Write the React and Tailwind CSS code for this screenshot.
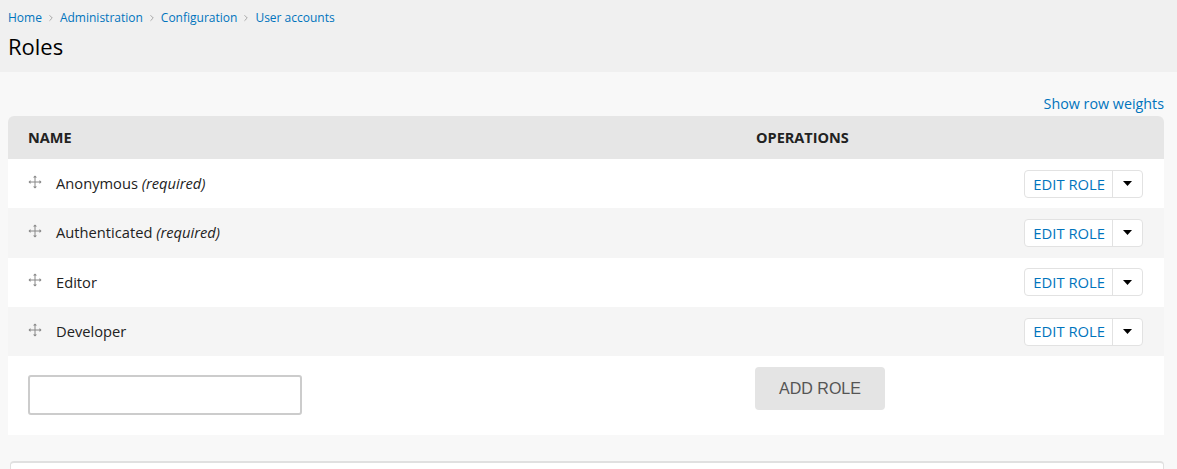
import { ChevronRight } from "lucide-react";

const roles = [
  { name: "Anonymous", required: true },
  { name: "Authenticated", required: true },
  { name: "Editor" },
  { name: "Developer" },
];

function DragHandle() {
  return (
    <svg width="14" height="14" viewBox="0 0 14 14" className="shrink-0 text-[#888]">
      <path d="M7 1v12M1 7h12" stroke="currentColor" strokeWidth="1" fill="none" />
      <path d="M7 0.5l-2 2h4zM7 13.5l-2-2h4zM0.5 7l2-2v4zM13.5 7l-2-2v4z" fill="currentColor" />
    </svg>
  );
}

function EditButton() {
  return (
    <div className="flex h-[28px] items-stretch rounded-[4px] border border-[#e2e2e2] bg-white">
      <a className="flex items-center pl-[8px] pr-[7px] text-[14.8px] text-[#0074bd]">EDIT ROLE</a>
      <div className="flex w-[30px] items-center justify-center border-l border-[#e2e2e2]">
        <svg width="9" height="5" viewBox="0 0 9 5">
          <path d="M0 0h9L4.5 5z" fill="#000" />
        </svg>
      </div>
    </div>
  );
}

export default function App() {
  return (
    <div className="min-h-[469px] bg-[#f8f8f8] font-['Open_Sans',sans-serif] text-[#222]">
      {/* Header */}
      <div className="h-[72px] bg-[#f0f0f0] px-[8px] pt-[9px]">
        <nav className="flex items-center text-[12px] text-[#0074bd]">
          {["Home", "Administration", "Configuration", "User accounts"].map((c, i) => (
            <span key={c} className="flex items-center">
              {i > 0 && <ChevronRight className="mx-[4px] h-[10px] w-[10px] text-[#999]" strokeWidth={2} />}
              <a>{c}</a>
            </span>
          ))}
        </nav>
        <h1 className="mt-[4px] text-[22px] leading-[30px] text-black">Roles</h1>
      </div>

      {/* Content */}
      <div className="px-[8px] pt-[22px]">
        <div className="flex justify-end pr-[5px] text-[14.3px] leading-[20px] text-[#0074bd]">
          <a>Show row weights</a>
        </div>
        <div className="mt-[2px] mr-[5px]">
          <div className="grid h-[43px] grid-cols-[748px_1fr] items-center rounded-t-[6px] bg-[#e6e6e6] text-[14.5px] font-bold">
            <div className="pl-[20px]">NAME</div>
            <div>OPERATIONS</div>
          </div>
          {roles.map((r, i) => (
            <div
              key={r.name}
              className={`flex h-[49.3px] items-center justify-between pl-[20px] pr-[21px] ${i % 2 ? "bg-[#f5f5f5]" : "bg-white"}`}
            >
              <div className="flex items-center gap-[14px] text-[14.7px]">
                <span className="-mt-[4px]"><DragHandle /></span>
                <span className="-mt-[1px]">
                  {r.name}
                  {r.required && <em> (required)</em>}
                </span>
              </div>
              <EditButton />
            </div>
          ))}
          <div className="grid h-[79px] grid-cols-[748px_1fr] bg-white">
            <div className="pl-[20px] pt-[19px]">
              <input className="h-[40px] w-[274px] rounded-[3px] border-2 border-[#ccc] bg-white" />
            </div>
            <div className="pt-[11px]">
              <button className="-ml-[1px] h-[43px] w-[130px] rounded-[4px] bg-[#e4e4e4] font-['Liberation_Sans',sans-serif] text-[16px] text-[#555]">
                ADD ROLE
              </button>
            </div>
          </div>
        </div>
        <div className="mt-[26px] mr-[5px] ml-[2px] h-[20px] rounded-t-[4px] border-t-2 border-x border-[#e0e0e0] bg-white" />
      </div>
    </div>
  );
}
